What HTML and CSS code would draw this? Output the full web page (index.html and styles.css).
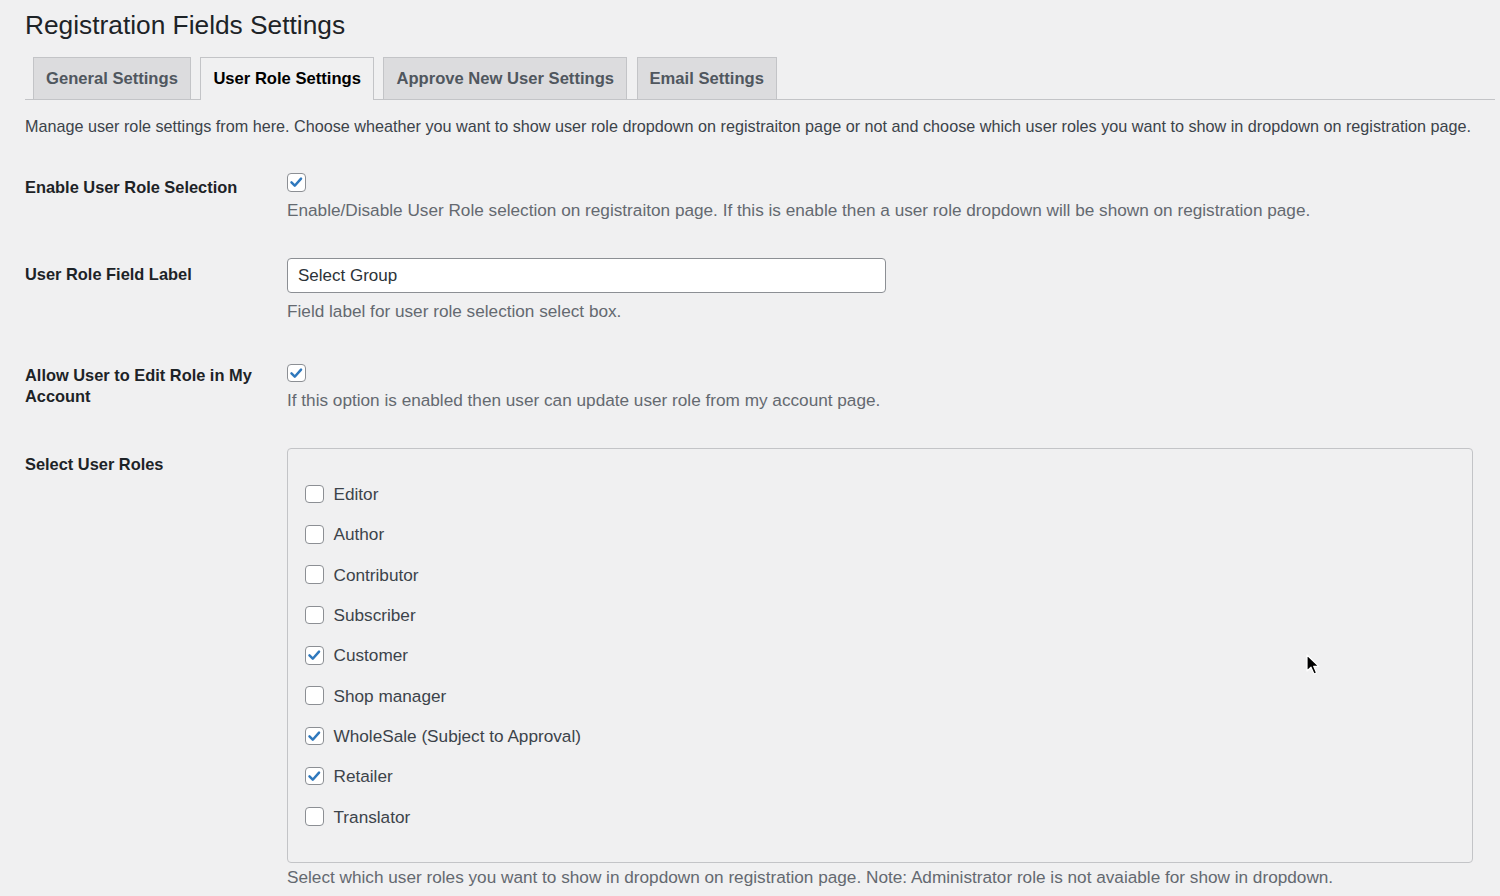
FILE: index.html
```html
<!DOCTYPE html>
<html lang="en">
<head>
<meta charset="utf-8">
<title>Registration Fields Settings</title>
<link rel="stylesheet" href="styles.css">
</head>
<body>
<div class="wrap">
  <h1 class="page-title">Registration Fields Settings</h1>
  <nav class="nav-tabs">
    <a class="nav-tab">General Settings</a>
    <a class="nav-tab active">User Role Settings</a>
    <a class="nav-tab">Approve New User Settings</a>
    <a class="nav-tab">Email Settings</a>
  </nav>
  <p class="intro">Manage user role settings from here. Choose wheather you want to show user role dropdown on registraiton page or not and choose which user roles you want to show in dropdown on registration page.</p>

  <div class="form-table">
    <div class="row row-check">
      <div class="label">Enable User Role Selection</div>
      <div class="field">
        <span class="cb checked"><svg viewBox="0 0 20 20"><path d="M4.2 10.2 L8.2 14.2 L15.8 5.6"/></svg></span>
        <p class="desc">Enable/Disable User Role selection on registraiton page. If this is enable then a user role dropdown will be shown on registration page.</p>
      </div>
    </div>

    <div class="row">
      <div class="label">User Role Field Label</div>
      <div class="field">
        <div class="text-input">Select Group</div>
        <p class="desc desc-input">Field label for user role selection select box.</p>
      </div>
    </div>

    <div class="row row-check row-two">
      <div class="label">Allow User to Edit Role in My Account</div>
      <div class="field">
        <span class="cb checked"><svg viewBox="0 0 20 20"><path d="M4.2 10.2 L8.2 14.2 L15.8 5.6"/></svg></span>
        <p class="desc">If this option is enabled then user can update user role from my account page.</p>
      </div>
    </div>

    <div class="row">
      <div class="label">Select User Roles</div>
      <div class="field">
        <div class="roles-box">
          <div class="role"><span class="cb"></span><span class="role-name">Editor</span></div>
          <div class="role"><span class="cb"></span><span class="role-name">Author</span></div>
          <div class="role"><span class="cb"></span><span class="role-name">Contributor</span></div>
          <div class="role"><span class="cb"></span><span class="role-name">Subscriber</span></div>
          <div class="role"><span class="cb checked"><svg viewBox="0 0 20 20"><path d="M4.2 10.2 L8.2 14.2 L15.8 5.6"/></svg></span><span class="role-name">Customer</span></div>
          <div class="role"><span class="cb"></span><span class="role-name">Shop manager</span></div>
          <div class="role"><span class="cb checked"><svg viewBox="0 0 20 20"><path d="M4.2 10.2 L8.2 14.2 L15.8 5.6"/></svg></span><span class="role-name">WholeSale (Subject to Approval)</span></div>
          <div class="role"><span class="cb checked"><svg viewBox="0 0 20 20"><path d="M4.2 10.2 L8.2 14.2 L15.8 5.6"/></svg></span><span class="role-name">Retailer</span></div>
          <div class="role"><span class="cb"></span><span class="role-name">Translator</span></div>
        </div>
        <p class="desc desc-box">Select which user roles you want to show in dropdown on registration page. Note: Administrator role is not avaiable for show in dropdown.</p>
      </div>
    </div>
  </div>
</div>
<svg class="cursor" viewBox="0 0 14 22" width="14" height="22"><path d="M1 1 L1 17 L5 13.2 L8 20 L10.6 18.9 L7.7 12.3 L12.8 12.3 Z" fill="#000" stroke="#fff" stroke-width="1.2" stroke-linejoin="round"/></svg>
</body>
</html>
```

FILE: styles.css
```css
html, body {
  margin: 0;
  padding: 0;
  background: #f0f0f1;
}

body {
  font-family: "Liberation Sans", Arial, sans-serif;
  color: #3c434a;
  position: relative;
  min-height: 896px;
  overflow: hidden;
}

.wrap {
  padding: 0 5px 0 25px;
}

.page-title {
  margin: 0 0 16px;
  padding-top: 9px;
  font-size: 26.3px;
  line-height: 32px;
  font-weight: 400;
  color: #1d2327;
}

.nav-tabs {
  display: flex;
  border-bottom: 1px solid #c3c4c7;
  padding-left: 8px;
}

.nav-tab {
  display: block;
  margin-right: 9.5px;
  padding: 8px 12px;
  line-height: 25px;
  font-size: 16.6px;
  font-weight: 700;
  color: #50575e;
  background: #dcdcde;
  border: 1px solid #c3c4c7;
  border-bottom: none;
}

.nav-tab.active {
  background: #f0f0f1;
  color: #000;
  margin-bottom: -1px;
  padding-bottom: 9px;
}

.intro {
  margin: 14px 0 17px;
  font-size: 16.2px;
  line-height: 24px;
  color: #3c434a;
  white-space: nowrap;
}

.row {
  display: flex;
  padding: 18px 0;
}

.label {
  width: 237px;
  padding-right: 25px;
  padding-top: 6px;
  flex: none;
  font-size: 16.4px;
  line-height: 21px;
  font-weight: 700;
  color: #1d2327;
}

.row-check .label {
  padding-top: 4px;
}

.row-two .label {
  padding-top: 1px;
}

.field {
  flex: 1;
  padding-right: 22px;
}

.cb {
  display: block;
  box-sizing: border-box;
  width: 18.5px;
  height: 18.5px;
  border: 1px solid #8c8f94;
  border-radius: 4px;
  background: #fff;
  flex: none;
}

.cb svg {
  display: block;
  width: 16.5px;
  height: 16.5px;
  fill: none;
  stroke: #2f78bd;
  stroke-width: 3;
  stroke-linecap: round;
  stroke-linejoin: round;
}

.desc {
  margin: 6px 0 0;
  font-size: 17.2px;
  line-height: 24px;
  color: #646970;
}

.desc-input {
  margin-bottom: 5px;
}

.text-input {
  box-sizing: border-box;
  width: 599px;
  height: 35px;
  border: 1px solid #8c8f94;
  border-radius: 4px;
  background: #fff;
  padding: 0 10px;
  font-size: 17px;
  line-height: 33px;
  color: #2c3338;
}

.roles-box {
  box-sizing: border-box;
  height: 415px;
  border: 1px solid #c3c4c7;
  border-radius: 4px;
  padding: 25px 17px 24px;
}

.role {
  display: flex;
  align-items: center;
  height: 40.3px;
  gap: 10px;
}

.role-name {
  font-size: 17.2px;
  line-height: 24px;
  color: #3c434a;
}

.desc-box {
  margin-top: 2px;
}

.cursor {
  position: absolute;
  left: 1306px;
  top: 654px;
}
```
